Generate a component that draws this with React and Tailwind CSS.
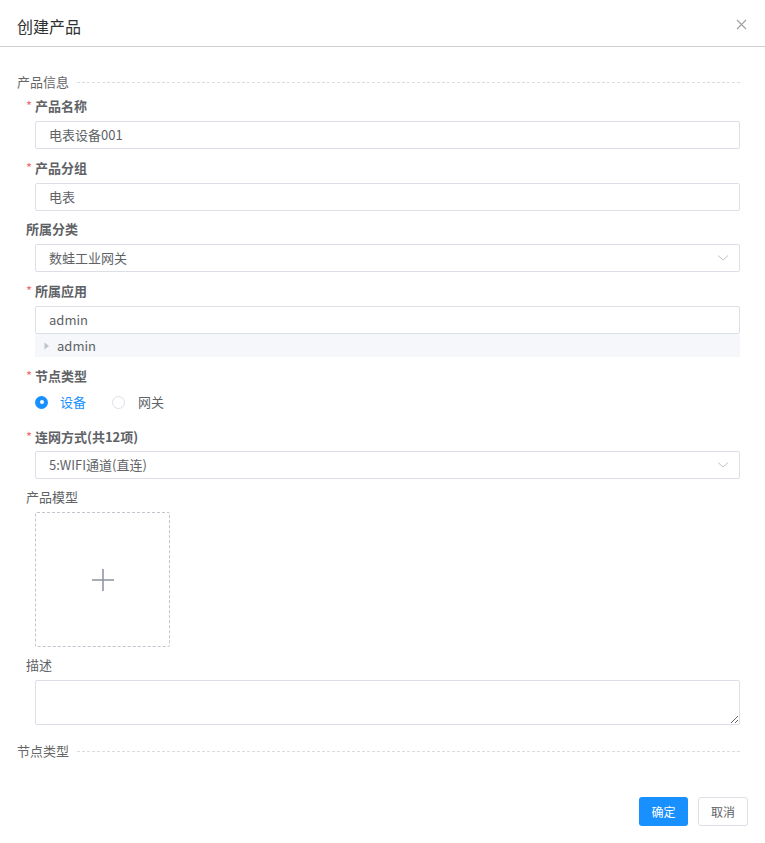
import React from "react";

const font = { fontFamily: '"Noto Sans CJK SC", "Noto Sans", sans-serif' };

function Label({ children, required, bold = true, className = "" }) {
  return (
    <div className={`h-4 leading-4 text-[13px] text-[#606266] flex items-center ${bold ? "font-bold" : ""} ${className}`}>
      {required ? <span className="text-[#f56c6c] w-[9px] font-normal">*</span> : null}
      <span>{children}</span>
    </div>
  );
}

function Chevron() {
  return (
    <svg width="12" height="8" viewBox="0 0 12 8" className="absolute right-[10px] top-1/2 -translate-y-1/2">
      <path d="M1 1.5 L6 6 L11 1.5" fill="none" stroke="#c0c4cc" strokeWidth="1" />
    </svg>
  );
}

function Input({ value, select, className = "" }) {
  return (
    <div className={`relative ml-[9px] h-[28px] border border-[#dcdfe6] rounded-[2px] flex items-center pl-[13px] text-[13px] text-[#606266] ${className}`}>
      {value}
      {select ? <Chevron /> : null}
    </div>
  );
}

function Section({ title, className = "" }) {
  return (
    <div className={`h-4 flex items-center gap-[8px] ${className}`}>
      <span className="text-[13px] text-[#666] leading-4">{title}</span>
      <div className="flex-1 border-t border-dashed border-[#dcdcdc]" />
    </div>
  );
}

export default function App() {
  return (
    <div className="w-[765px] h-[843px] bg-white relative" style={font}>
      <div className="h-[47px] border-b border-[#d0d0d0] flex items-center justify-between pl-[17px] pr-[18px]">
        <span className="text-[16px] text-[#303133] mt-[6px]">创建产品</span>
        <svg width="11" height="11" viewBox="0 0 11 11" className="mb-[-2px]">
          <path d="M1 1 L10 10 M10 1 L1 10" stroke="#a0a0a0" strokeWidth="1.1" />
        </svg>
      </div>

      <div className="pl-[17px] pr-[25px]">
        <Section title="产品信息" className="mt-[27px]" />

        <div className="pl-[9px] mt-[8px]">
          <Label required>产品名称</Label>
          <Input value="电表设备001" className="mt-[7px]" />

          <Label required className="mt-[11px]">产品分组</Label>
          <Input value="电表" className="mt-[7px]" />

          <Label className="mt-[10px]">所属分类</Label>
          <Input value="数蛙工业网关" select className="mt-[7px]" />

          <Label required className="mt-[11px]">所属应用</Label>
          <Input value="admin" className="mt-[7px]" />
          <div className="ml-[9px] h-[23px] bg-[#f5f7fa] flex items-center pl-[9px] text-[13px] text-[#606266]">
            <svg width="6" height="8" viewBox="0 0 6 8" className="mr-[7px]">
              <path d="M0.5 0.5 L5 4 L0.5 7.5 Z" fill="#c0c4cc" />
            </svg>
            admin
          </div>

          <Label required className="mt-[11px]">节点类型</Label>
          <div className="ml-[9px] mt-[6px] h-[24px] flex items-center text-[13px]">
            <span className="w-[13px] h-[13px] rounded-full bg-[#1890ff] flex items-center justify-center">
              <span className="w-[4px] h-[4px] rounded-full bg-white" />
            </span>
            <span className="ml-[12px] text-[#1890ff]">设备</span>
            <span className="ml-[26px] w-[13px] h-[13px] rounded-full border border-[#dcdfe6] bg-white" />
            <span className="ml-[13px] text-[#606266]">网关</span>
          </div>

          <Label required className="mt-[15px]">连网方式(共12项)</Label>
          <Input value="5:WIFI通道(直连)" select className="mt-[6px]" />

          <Label bold={false} className="mt-[10px]">产品模型</Label>
          <div className="ml-[9px] mt-[7px] w-[135px] h-[135px] border border-dashed border-[#c0c4cc] rounded-[2px] flex items-center justify-center">
            <svg width="22" height="22" viewBox="0 0 22 22">
              <path d="M11 0 V22 M0 11 H22" stroke="#8c939d" strokeWidth="1.5" />
            </svg>
          </div>

          <Label bold={false} className="mt-[10px]">描述</Label>
          <textarea className="block ml-[9px] mt-[7px] w-[calc(100%-9px)] h-[45px] border border-[#dcdfe6] rounded-[2px] outline-none" />
        </div>

        <Section title="节点类型" className="mt-[18px]" />
      </div>

      <div className="flex justify-end gap-[10px] pr-[17px] mt-[38px]">
        <button className="w-[49px] h-[29px] rounded-[3px] bg-[#1890ff] text-white text-[12px]">确定</button>
        <button className="w-[50px] h-[29px] rounded-[3px] border border-[#dcdfe6] bg-white text-[#606266] text-[12px]">取消</button>
      </div>
    </div>
  );
}
